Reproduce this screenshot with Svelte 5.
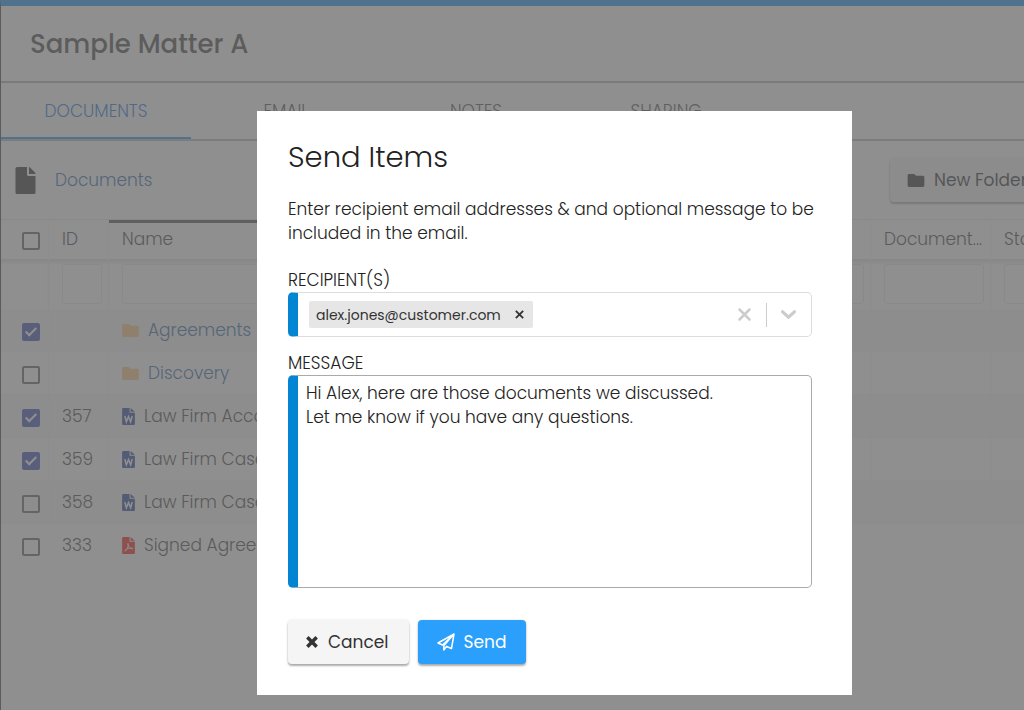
<script>
  let tabs = ['Documents', 'Email', 'Notes', 'Sharing'];
  let activeTab = $state('Documents');

  // first of these has no heading of its own
  let columns = ['', 'Document...', 'Status'];

  let rows = $state([
    { id: '', name: 'Agreements', type: 'folder', checked: true },
    { id: '', name: 'Discovery', type: 'folder', checked: false },
    { id: '357', name: 'Law Firm Account', type: 'word', checked: true },
    { id: '359', name: 'Law Firm Case File', type: 'word', checked: true },
    { id: '358', name: 'Law Firm Case Notes', type: 'word', checked: false },
    { id: '333', name: 'Signed Agreement', type: 'pdf', checked: false }
  ]);

  let recipients = $state(['alex.jones@customer.com']);
  let recipientText = $state('');
  let message = $state('Hi Alex, here are those documents we discussed.\nLet me know if you have any questions.');

  function removeRecipient(address) {
    recipients = recipients.filter((r) => r !== address);
  }

  function addRecipient(e) {
    if (e.key !== 'Enter' || !recipientText.trim()) return;
    recipients = [...recipients, recipientText.trim()];
    recipientText = '';
  }
</script>

{#snippet folder()}
  <svg class="folder" viewBox="0 0 18 14" aria-hidden="true">
    <path d="M1.500 0h5.100c.5 0 1 .2 1.300.5L9 2H16.500a1.500 1.500 0 0 1 1.500 1.500v9a1.500 1.500 0 0 1-1.500 1.500h-15A1.500 1.500 0 0 1 0 12.500v-11A1.500 1.500 0 0 1 1.500 0z" />
  </svg>
{/snippet}

{#snippet cross()}
  <svg class="cross" viewBox="0 0 12 12" aria-hidden="true">
    <path d="M2 2l8 8M10 2l-8 8" />
  </svg>
{/snippet}

<div class="page">
  <header class="header">
    <h1>Sample Matter A</h1>
  </header>

  <nav class="tabs">
    {#each tabs as tab (tab)}
      <button class="tab" class:active={tab === activeTab} onclick={() => (activeTab = tab)}>{tab}</button>
    {/each}
  </nav>

  <div class="content">
    <div class="toolbar">
      <svg class="file" viewBox="0 0 20 27" aria-hidden="true">
        <path d="M1.500 0H11.500v7.500c0 .8.600 1.500 1.500 1.500h7v16.500a1.500 1.500 0 0 1-1.500 1.500h-17A1.500 1.500 0 0 1 0 25.500v-24A1.500 1.500 0 0 1 1.500 0zM13.500 0c.4 0 .7.200 1 .5l5 5c.3.3.5.7.5 1.100V7h-6.500z" />
      </svg>
      <a href="#documents">Documents</a>
      <button class="btn new-folder">{@render folder()} New Folder</button>
    </div>

    <table>
      <colgroup>
        <col class="col-check" />
        <col class="col-id" />
        <col class="col-name" />
        <col />
        <col class="col-meta" />
        <col class="col-meta" />
      </colgroup>
      <thead>
        <tr class="head">
          <th class="check"><input type="checkbox" aria-label="Select all" /></th>
          <th>ID</th>
          <th class="sorted">Name</th>
          {#each columns as column}
            <th>{column}</th>
          {/each}
        </tr>
        <tr class="filters">
          <td></td>
          <td><input type="text" aria-label="Filter ID" /></td>
          <td><input type="text" aria-label="Filter Name" /></td>
          {#each columns as column}
            <td><input type="text" aria-label="Filter {column}" /></td>
          {/each}
        </tr>
      </thead>
      <tbody>
        {#each rows as row (row.name)}
          <tr>
            <td class="check"><input type="checkbox" bind:checked={row.checked} aria-label="Select {row.name}" /></td>
            <td>{row.id}</td>
            <td>
              <div class="name">
                {#if row.type === 'folder'}
                  {@render folder()}
                  <a href="#folder">{row.name}</a>
                {:else}
                  <svg class="doc {row.type}" viewBox="0 0 12 16" aria-hidden="true">
                    <path class="sheet" d="M1 0h6v4.500h5V15a1 1 0 0 1-1 1H1a1 1 0 0 1-1-1V1a1 1 0 0 1 1-1zM8 0l4 3.600H8z" />
                    {#if row.type === 'word'}
                      <path class="mark" d="M2.500 7.500l1.500 5.500 2-5 2 5 1.500-5.500" />
                    {:else}
                      <path class="mark" d="M5.500 6c-.6 1.500 1.500 5 4 5.200 1 0 .5-1.200-1.500-.9-2 .2-4 .9-5.200 2.200-.7.900.5 1 1.200-.3C5 10.500 6.600 7.500 5.500 6z" />
                    {/if}
                  </svg>
                  <span>{row.name}</span>
                {/if}
              </div>
            </td>
            {#each columns as column}
              <td></td>
            {/each}
          </tr>
        {/each}
      </tbody>
    </table>
  </div>
</div>

<div class="overlay">
  <div class="modal" role="dialog" aria-modal="true" aria-labelledby="modal-title">
    <h2 id="modal-title">Send Items</h2>
    <p>Enter recipient email addresses &amp; and optional message to be included in the email.</p>

    <label for="recipients">RECIPIENT(S)</label>
    <div class="recipients">
      {#each recipients as address (address)}
        <span class="chip">
          {address}
          <button aria-label="Remove {address}" onclick={() => removeRecipient(address)}>{@render cross()}</button>
        </span>
      {/each}
      <input id="recipients" type="text" bind:value={recipientText} onkeydown={addRecipient} />
      <button class="clear" aria-label="Clear all" onclick={() => (recipients = [])}>{@render cross()}</button>
      <span class="divider"></span>
      <button class="open" aria-label="Show options">
        <svg viewBox="0 0 14 8" aria-hidden="true"><path d="M1.500 1.500L7 6.500l5.500-5" /></svg>
      </button>
    </div>

    <label for="message">MESSAGE</label>
    <textarea id="message" bind:value={message}></textarea>

    <div class="actions">
      <button class="btn">{@render cross()} Cancel</button>
      <button class="btn primary">
        <svg class="plane" viewBox="0 0 18 18" aria-hidden="true">
          <path d="M17 1L1 10l4.500 2L17 1zM17 1l-2.500 14.500-5.500-2.300M6.800 12.500v4.500l2.700-3.600M17 1L7 12.500" />
        </svg>
        Send
      </button>
    </div>
  </div>
</div>

<style>
  :global(body) {
    margin: 0;
    background: #fff;
  }
  .page, .overlay, button, input, textarea {
    font-family: Poppins, Inter, sans-serif;
    font-size: 17px;
    font-weight: 300;
    line-height: 24px;
    color: #222;
  }
  .page, .overlay { box-sizing: border-box; }
  .page {
    min-height: 100vh;
    overflow: hidden;
    border-top: 6px solid #2196f3;
    border-left: 1px solid #444;
  }
  button { cursor: pointer; }
  svg { flex-shrink: 0; }
  a { color: #2d6cb0; text-decoration: none; }

  .header {
    padding: 19px 29px 17px;
    border-bottom: 2px solid #b4b4b4;
  }
  h1 {
    margin: 0;
    font-size: 26px;
    line-height: 39px;
    font-weight: 500;
    color: #4a4a4a;
  }
  .tabs {
    display: flex;
    border-bottom: 2px solid #bbb;
  }
  .tab {
    width: 190px;
    padding: 16px 0 14px;
    border: 0;
    border-bottom: 2px solid transparent;
    background: none;
    text-transform: uppercase;
    color: #555;
  }
  .tab.active { color: #1b7be0; border-color: #2196f3; }

  .content { width: calc(100% + 87px); }
  .toolbar {
    display: flex;
    align-items: center;
    height: 78px;
    padding: 0 64px 0 14px;
    box-sizing: border-box;
  }
  .file { width: 21px; height: 27px; margin-right: 19px; fill: #333; }
  .folder { width: 18px; height: 13px; fill: #333; }
  .cross { width: 14px; height: 14px; fill: none; stroke: currentColor; stroke-width: 3; }

  .btn {
    display: flex;
    align-items: center;
    gap: 9px;
    height: 44px;
    padding: 0 20px 0 17px;
    border: 0;
    border-radius: 4px;
    background: #f5f5f5;
    box-shadow: 0 2px 2px rgba(0, 0, 0, 0.3), 0 0 3px rgba(0, 0, 0, 0.1);
    font-weight: 400;
    color: #333;
  }
  .btn.primary { padding: 0 20px 0 19px; background: #2a9ffb; color: #fff; }
  .new-folder { margin-left: auto; }

  table {
    width: 100%;
    table-layout: fixed;
    border-collapse: separate;
    border-spacing: 0;
    border-top: 1px solid #e4e4e4;
    color: #444;
  }
  .col-check { width: 48px; }
  .col-id { width: 60px; }
  .col-name { width: 420px; }
  .col-meta { width: 120px; }
  th, td {
    box-sizing: border-box;
    padding: 0 6px 0 13px;
    border-right: 1px solid #f2f2f2;
    font-weight: 300;
    text-align: left;
    white-space: nowrap;
  }
  th { height: 39px; padding-bottom: 4px; border-top: 3px solid transparent; }
  th.sorted { border-top-color: #555; }
  .check { padding: 3px 0 0 21px; }
  th.check { padding-top: 0; }
  .filters td {
    height: 50px;
    padding-bottom: 1px;
    box-shadow: inset 0 5px 4px -2px #ddd;
  }
  tbody td { height: 43px; border-bottom: 1px solid #f2f2f2; }
  tbody tr:nth-child(odd) { background: #f6f6f6; }
  tbody tr:last-child td { border-color: transparent; }

  input[type='checkbox'] {
    appearance: none;
    display: grid;
    place-items: center;
    box-sizing: border-box;
    width: 18px;
    height: 18px;
    margin: 0;
    border: 2px solid #666;
    border-radius: 2px;
  }
  input[type='checkbox']:checked { background: #3f51b5; border-color: #3f51b5; }
  input[type='checkbox']:checked::after {
    content: '';
    width: 4px;
    height: 9px;
    margin-bottom: 3px;
    border: solid #fff;
    border-width: 0 2px 2px 0;
    transform: rotate(45deg);
  }
  .filters input {
    display: block;
    box-sizing: border-box;
    width: 100%;
    height: 40px;
    border: 1px solid #e8e8e8;
    border-radius: 3px;
    background: #fff;
  }

  .name { display: flex; align-items: center; }
  .name .folder { width: 17px; height: 13px; margin-right: 9px; fill: #ffc98a; }
  .doc { width: 13px; height: 17px; margin-right: 9px; }
  .word .sheet { fill: #2c479f; }
  .pdf .sheet { fill: #f4231a; }
  .mark { fill: none; stroke: #fff; stroke-width: 1.400; }
  .pdf .mark { stroke-width: 0.900; }

  .overlay {
    position: fixed;
    inset: 0;
    padding: 111px 172px 0 257px;
    background: rgba(100, 100, 100, 0.72);
    overflow: auto;
  }
  .modal { padding: 25px 40px 31px 31px; background: #fff; }
  h2 {
    margin: 0 0 19px;
    font-size: 29px;
    line-height: 42px;
    font-weight: 300;
    color: #222;
  }
  p { margin: 0 -9px 23px 0; }
  label { display: block; }

  .recipients {
    display: flex;
    align-items: center;
    box-sizing: border-box;
    height: 45px;
    margin: 0 0 14px;
    padding-left: 11px;
    border: 1px solid #ddd;
    border-left: 10px solid #0285d3;
    border-radius: 5px;
  }
  .recipients button {
    display: flex;
    padding: 0;
    border: 0;
    background: none;
    color: #ccc;
  }
  .recipients input {
    flex: 1;
    min-width: 0;
    border: 0;
    outline: 0;
  }
  .chip {
    display: flex;
    align-items: center;
    gap: 13px;
    height: 27px;
    padding: 0 8px 0 7px;
    border-radius: 2px;
    background: #e6e6e6;
    font-size: 14px;
    font-weight: 400;
    color: #333;
  }
  .recipients .chip button { color: #333; }
  .chip .cross { width: 11px; height: 11px; stroke-width: 2; }
  .clear .cross { width: 15px; height: 15px; stroke-linecap: round; stroke-width: 2; }
  .divider {
    width: 1px;
    height: 24px;
    margin: 0 14px;
    background: #ccc;
  }
  .open { margin-right: 15px; }
  .open svg { width: 15px; height: 9px; fill: none; stroke: currentColor; stroke-width: 2; stroke-linecap: round; }

  textarea {
    display: block;
    box-sizing: border-box;
    width: 100%;
    height: 213px;
    padding: 5px 9px 5px 8px;
    border: 1px solid #aaa;
    border-left: 10px solid #0285d3;
    border-radius: 5px;
    outline: 0;
    resize: none;
  }
  .actions { display: flex; gap: 9px; margin-top: 32px; }
  .clear .cross, .open svg { stroke-width: 3; }
  .clear .cross { stroke-width: 2; }
  .plane { width: 18px; height: 18px; fill: none; stroke: #fff; stroke-width: 1.500; stroke-linejoin: round; }
</style>
